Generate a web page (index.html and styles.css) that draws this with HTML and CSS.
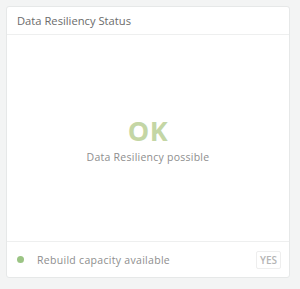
FILE: index.html
```html
<!DOCTYPE html>
<html lang="en">
<head>
    <meta charset="UTF-8">
    <title>Data Resiliency Status</title>
    <link rel="stylesheet" href="styles.css">
</head>
<body>
    <div class="card">
        <div class="card-header">Data Resiliency Status</div>
        <div class="card-body">
            <div class="status">OK</div>
            <div class="status-text">Data Resiliency possible</div>
        </div>
        <div class="card-footer">
            <span class="dot"></span>
            <span class="footer-label">Rebuild capacity available</span>
            <span class="badge">YES</span>
        </div>
    </div>
</body>
</html>
```

FILE: styles.css
```css
body {
    margin: 0;
    padding: 6px 10px 11px 6px;
    background-color: #f3f4f4;
    font-family: "Open Sans", Arial, sans-serif;
    color: #6a6a6a;
}

.card {
    background-color: #fff;
    border: 1px solid #e6e8e8;
    border-radius: 3px;
    height: 270px;
    display: flex;
    flex-direction: column;
}

.card-header {
    height: 27px;
    line-height: 27px;
    padding-left: 10px;
    font-size: 11.2px;
    color: #6b6b6b;
    border-bottom: 1px solid #eeefef;
}

.card-body {
    flex: 1;
    display: flex;
    flex-direction: column;
    align-items: center;
    padding-top: 80px;
}

.status {
    font-size: 27px;
    font-weight: 700;
    color: #c4d6a5;
    line-height: 32px;
    letter-spacing: 0.5px;
}

.status-text {
    font-size: 10.5px;
    letter-spacing: 0.25px;
    color: #8e8e8e;
    margin-top: 3px;
}

.card-footer {
    height: 35px;
    border-top: 1px solid #eeefef;
    display: flex;
    align-items: center;
    padding: 0 8px 0 10px;
}

.dot {
    width: 7px;
    height: 7px;
    border-radius: 50%;
    background-color: #9bc484;
    margin-right: 13px;
}

.footer-label {
    flex: 1;
    font-size: 10.5px;
    letter-spacing: 0.3px;
    color: #8e8e8e;
}

.badge {
    font-size: 10px;
    font-weight: 600;
    color: #b5b5b5;
    border: 1px solid #eeeeee;
    border-radius: 2px;
    padding: 2px 3px;
    line-height: 12px;
}
```
